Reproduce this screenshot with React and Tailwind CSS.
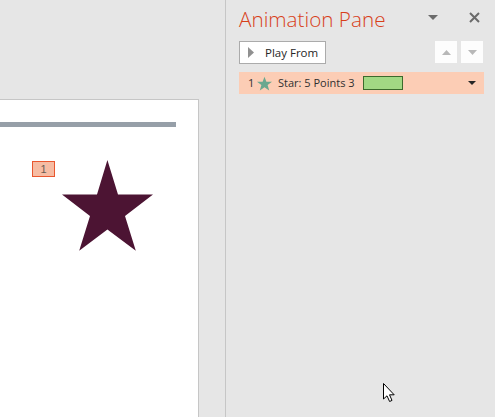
import React from "react";

const SEGOE = "font-['Open_Sans','Noto_Sans',sans-serif]";

const Triangle = ({ className, points }) => (
  <svg className={className} viewBox="0 0 10 10" preserveAspectRatio="none">
    <polygon points={points} fill="currentColor" />
  </svg>
);

const Slide = () => (
  <div className="mt-[99px] h-[318px] w-[199px] border-t border-r border-[#c6c6c6] bg-white pt-[22px]">
    <div className="h-[5px] w-[176px] bg-[#969fa8]" />
    <div className="mt-[33px] flex items-start pl-[32px]">
      <div className="mt-[1px] flex h-[16px] w-[23px] items-center justify-center border border-[#e9572f] bg-[#f6bca3] font-['Liberation_Sans',sans-serif] text-[11px] text-[#6a5c54]">
        1
      </div>
      <svg className="ml-[7px] h-[92px] w-[92px]" viewBox="62 160 92 92">
        <polygon
          points="107.4,160 118,194.4 153,194.4 125,216 135.8,250.8 107.4,229.4 79.2,250.8 90,216 62,194.4 97,194.4"
          fill="#4c1433"
        />
      </svg>
    </div>
  </div>
);

const Pane = () => (
  <div className={`flex h-full w-[270px] flex-col border-l border-[#c6c6c6] pl-[13px] ${SEGOE}`}>
    <div className="flex h-[41px] items-start">
      <span className="mt-[5px] w-[189px] text-[20.7px] leading-[28px] font-light whitespace-nowrap text-[#d83f1a]">
        Animation Pane
      </span>
      <Triangle className="mt-[15px] h-[5px] w-[10px] text-[#6b6b6b]" points="0,0 10,0 5,10" />
      <svg className="mt-[12px] ml-[31px] h-[11px] w-[11px] text-[#6b6b6b]" viewBox="0 0 11 11">
        <path d="M1 1 L10 10 M10 1 L1 10" stroke="currentColor" strokeWidth="2" />
      </svg>
    </div>
    <div className="flex h-[23px] items-start">
      <div className="flex h-[23px] w-[87px] items-center border border-[#ababab] bg-white pl-[8px]">
        <Triangle className="h-[11px] w-[6px] text-[#909090]" points="0,0 10,5 0,10" />
        <span className="ml-[11px] text-[11.5px] leading-none text-[#262626]">Play From</span>
      </div>
      <div className="ml-[109px] flex h-[22px] w-[22px] items-center justify-center bg-[#fdfdfd]">
        <Triangle className="h-[5px] w-[9px] text-[#b8b8b8]" points="5,0 10,10 0,10" />
      </div>
      <div className="ml-[4px] flex h-[22px] w-[22px] items-center justify-center bg-[#fdfdfd]">
        <Triangle className="h-[5px] w-[9px] text-[#b8b8b8]" points="0,0 10,0 5,10" />
      </div>
    </div>
    <div className="mt-[8px] flex h-[22px] w-[245px] items-center bg-[#fccdb5] pl-[9px] text-[11px] text-[#303030]">
      <span className="w-[9px]">1</span>
      <svg className="h-[15px] w-[15px]" viewBox="0 0 24 24">
        <polygon points="12,1 15,9 24,9 17,14.5 19.5,23 12,18 4.500,23 7,14.5 0,9 9,9" fill="#6aa88f" />
      </svg>
      <span className="ml-[6px] w-[85px] whitespace-nowrap">Star: 5 Points 3</span>
      <div className="h-[14px] w-[40px] border border-[#3c6a2c] bg-[#a2d884]" />
      <Triangle className="ml-[65px] h-[4px] w-[8px] text-[#262626]" points="0,0 10,0 5,10" />
    </div>
  </div>
);

export default function App() {
  return (
    <div className="relative flex h-[417px] w-[495px] overflow-hidden bg-[#e6e6e6]">
      <div className="w-[225px]">
        <Slide />
      </div>
      <Pane />
      <svg className="absolute top-[383px] left-[383px] h-[19px] w-[12px]" viewBox="0 0 12 19">
        <path
          d="M0.5 0.5 V16 L4 12.8 L6.6 18.5 L9 17.4 L6.500 11.800 H11.200 Z"
          fill="#fff"
          stroke="#000"
          strokeWidth="1"
        />
      </svg>
    </div>
  );
}
